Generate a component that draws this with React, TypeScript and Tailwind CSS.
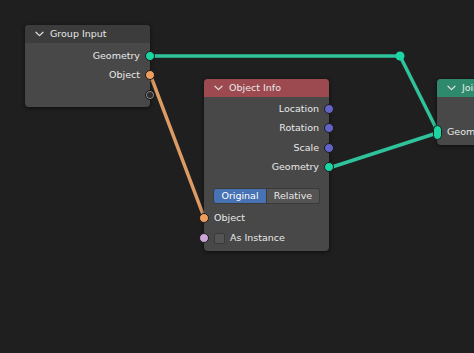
import React from "react";

const FONT = { fontFamily: '"DejaVu Sans", "Liberation Sans", sans-serif' };

function Chevron() {
  return (
    <svg width="9" height="6" viewBox="0 0 9 6" className="shrink-0">
      <polyline points="1,1.2 4.5,4.6 8,1.2" fill="none" stroke="#e0e0e0" strokeWidth="1.2" strokeLinecap="round" strokeLinejoin="round" />
    </svg>
  );
}

function Socket({ color, side, ring }: { color: string; side: "l" | "r"; ring?: boolean }) {
  return (
    <span
      className={`absolute top-1/2 w-[10px] h-[10px] -mt-[5px] rounded-full border border-[#1a1a1a] ${side === "r" ? "-right-[5px]" : "-left-[5px]"}`}
      style={{ background: ring ? "#2e2e2e" : color, boxShadow: ring ? "inset 0 0 0 1px #8a8a8a" : undefined }}
    />
  );
}

function Header({ title, bg }: { title: string; bg: string }) {
  return (
    <div className={`h-[18px] flex items-center gap-[6px] pl-[10px] rounded-t-[4px] ${bg}`}>
      <Chevron />
      <span className="text-[#e8e8e8] whitespace-nowrap">{title}</span>
    </div>
  );
}

function OutRow({ label, color, ring }: { label?: string; color: string; ring?: boolean }) {
  return (
    <div className="relative h-[19.5px] flex items-center justify-end pr-[10px] text-[#e8e8e8]">
      {label}
      <Socket color={color} side="r" ring={ring} />
    </div>
  );
}

export default function App() {
  return (
    <div className="relative w-[474px] h-[353px] overflow-hidden bg-[#1f1f1f] text-[9.5px]" style={FONT}>
      <svg className="absolute inset-0" width="474" height="353">
        <g fill="none" strokeWidth="3.5" strokeLinecap="round">
          <polyline points="150,56 400,56 436,128" stroke="#2fc29b" />
          <line x1="329" y1="168" x2="437" y2="133" stroke="#2fc29b" />
          <polyline points="150,75 153,82 204,217" stroke="#dc9b63" />
        </g>
        <circle cx="400" cy="56" r="4.5" fill="#1bd6a4" />
      </svg>

      {/* Group Input */}
      <div className="absolute left-[25px] top-[25px] w-[125px] rounded-[4px] bg-[#484848] shadow-[0_1px_4px_rgba(0,0,0,0.6)]">
        <Header title="Group Input" bg="bg-[#3c3c3c]" />
        <div className="pt-[3px] pb-[2px]">
          <OutRow label="Geometry" color="#19d6a3" />
          <OutRow label="Object" color="#ed9e5c" />
          <OutRow color="#2e2e2e" ring />
        </div>
      </div>

      {/* Object Info */}
      <div className="absolute left-[204px] top-[79px] w-[125px] rounded-[4px] bg-[#484848] shadow-[0_1px_4px_rgba(0,0,0,0.6)]">
        <Header title="Object Info" bg="bg-[#9c4950]" />
        <div className="pt-[2px] pb-[3px]">
          <OutRow label="Location" color="#6363c7" />
          <OutRow label="Rotation" color="#6363c7" />
          <OutRow label="Scale" color="#6363c7" />
          <OutRow label="Geometry" color="#19d6a3" />
          <div className="flex px-[9px] mt-[11px] mb-[4px]">
            <div className="flex-1 h-[16px] flex items-center justify-center rounded-l-[3px] bg-[#4772b3] text-white border border-[#3a3a3a]">Original</div>
            <div className="flex-1 h-[16px] flex items-center justify-center rounded-r-[3px] bg-[#545454] text-[#e8e8e8] border border-l-0 border-[#3a3a3a]">Relative</div>
          </div>
          <div className="relative h-5 flex items-center pl-[10px] text-[#e8e8e8]">
            Object
            <Socket color="#ed9e5c" side="l" />
          </div>
          <div className="relative h-5 flex items-center pl-[10px] gap-[5px] text-[#e8e8e8]">
            <span className="w-[11px] h-[11px] rounded-[2px] bg-[#545454] border border-[#3a3a3a]" />
            As Instance
            <Socket color="#cca6d6" side="l" />
          </div>
        </div>
      </div>

      {/* Join Geometry */}
      <div className="absolute left-[437px] top-[79px] w-[125px] h-[66px] rounded-[4px] bg-[#484848] shadow-[0_1px_4px_rgba(0,0,0,0.6)]">
        <Header title="Join Geometry" bg="bg-[#2f8a6d]" />
        <div className="relative mt-[25px] h-5 flex items-center pl-[10px] text-[#e8e8e8]">
          Geometry
          <span className="absolute left-[-4.5px] top-[2.5px] w-[9px] h-[15px] rounded-full bg-[#19d6a3] border border-[#1a1a1a]" />
        </div>
      </div>
    </div>
  );
}
